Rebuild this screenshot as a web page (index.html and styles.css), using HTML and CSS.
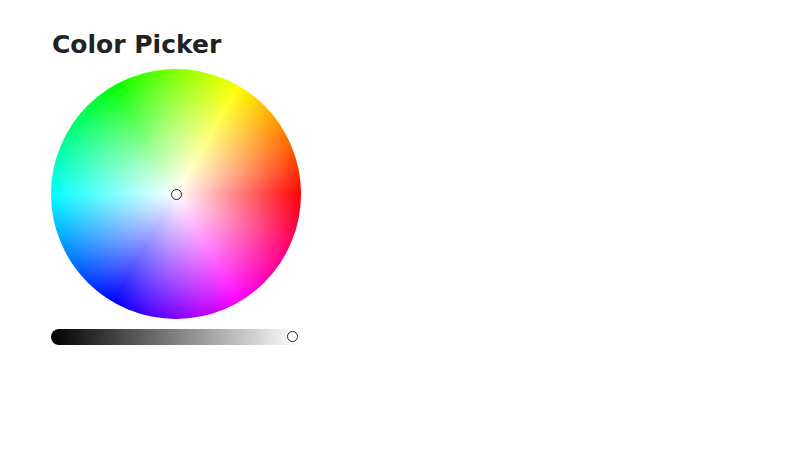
FILE: index.html
```html
<!DOCTYPE html>
<html>
<head>
    <title>Color Picker</title>
    <link rel="stylesheet" href="styles.css">
</head>
<body>
    <div class="picker">
        <h1>Color Picker</h1>
        <div class="wheel">
            <div class="wheel-thumb"></div>
        </div>
        <div class="lightness">
            <div class="lightness-thumb"></div>
        </div>
    </div>
</body>
</html>
```
FILE: styles.css
```css
body {
    font-family: 'DejaVu Sans', Verdana, sans-serif;
    margin: 0;
    padding: 0;
    background-color: #fff;
    color: #222;
}
.picker {
    padding: 30px 0 0 51px;
    width: 250px;
}
h1 {
    margin: 0 0 10px 1px;
    font-size: 25px;
    font-weight: bold;
    color: #222;
}
.wheel {
    position: relative;
    width: 250px;
    height: 250px;
    border-radius: 50%;
    background:
        radial-gradient(circle closest-side, #fff 0%, rgba(255, 255, 255, 0) 100%),
        conic-gradient(#80ff00, #ffff00 30deg, #ff0000 90deg, #ff00ff 150deg,
            #0000ff 210deg, #00ffff 270deg, #00ff00 330deg, #80ff00 360deg);
}
.wheel-thumb {
    position: absolute;
    left: 50%;
    top: 50%;
    width: 9px;
    height: 9px;
    margin: -5px 0 0 -5px;
    border: 1.5px solid #222;
    border-radius: 50%;
}
.lightness {
    position: relative;
    margin-top: 10px;
    width: 248px;
    height: 16px;
    border-radius: 8px;
    background: linear-gradient(to right, #000, #fff);
}
.lightness-thumb {
    position: absolute;
    left: 236px;
    top: 2px;
    width: 9px;
    height: 9px;
    border: 1.5px solid #222;
    border-radius: 50%;
    background: #fff;
}
```
